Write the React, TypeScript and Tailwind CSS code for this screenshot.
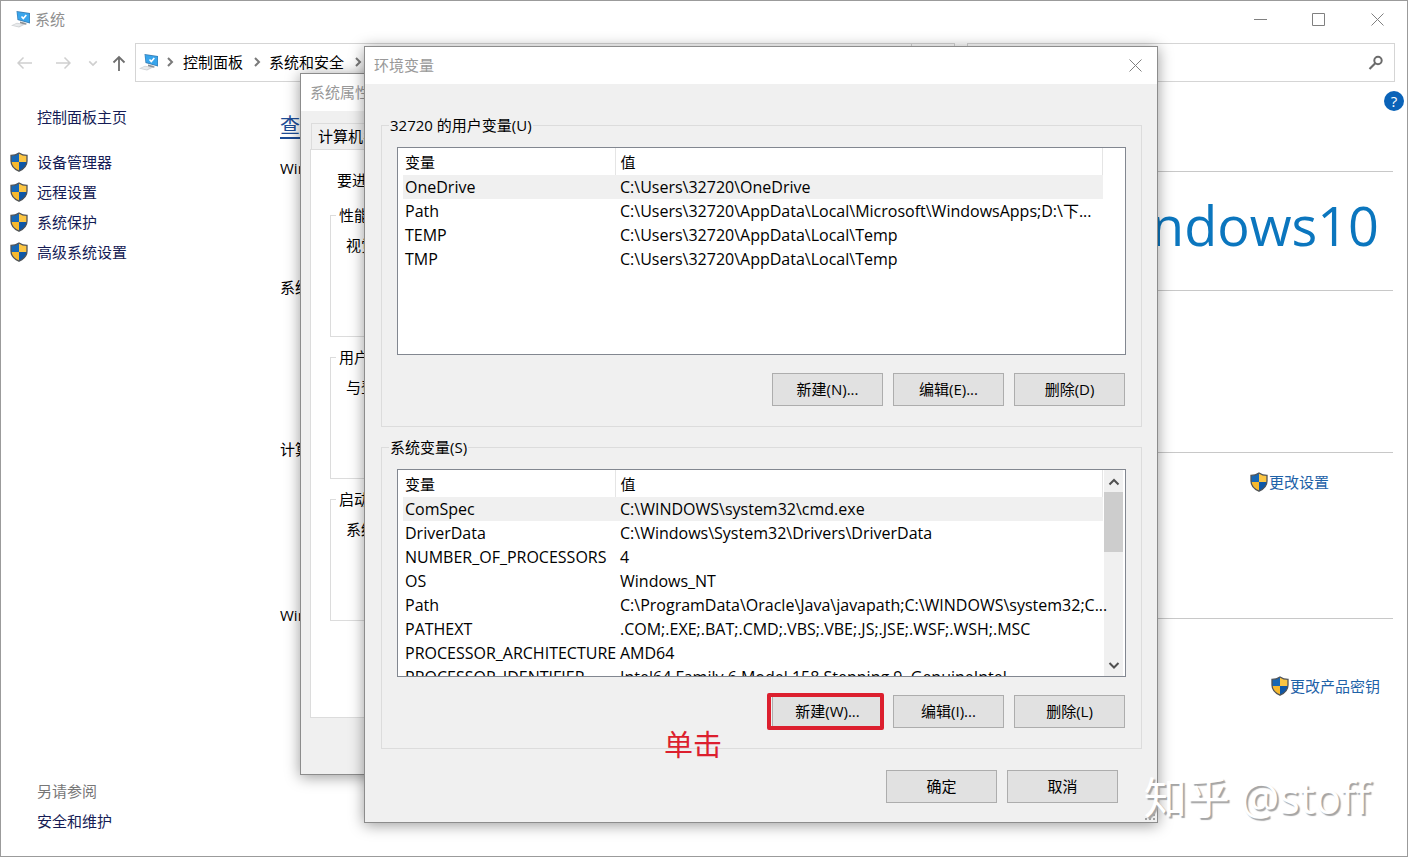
const Shield = () => (
  <svg className="h-5 w-[18px] shrink-0" viewBox="0 0 18 20" aria-hidden="true">
    <clipPath id="shield">
      <path d="M9 1C7 2.400 4 3.400 1 3.400V9c0 5 3.500 8.200 8 10.200 4.500-2 8-5.200 8-10.200V3.400C14 3.400 11 2.400 9 1z" />
    </clipPath>
    <g clipPath="url(#shield)">
      <path fill="#1767b5" d="M0 0h9v10H0z" />
      <path fill="#fbc543" d="M9 0h9v10H9z" />
      <path fill="#f6b92f" d="M0 10h9v10H0z" />
      <path fill="#0f57a6" d="M9 10h9v10H9z" />
    </g>
    <path
      fill="none"
      stroke="#4f5358"
      strokeWidth="1.300"
      d="M9 1C7 2.400 4 3.400 1 3.400V9c0 5 3.500 8.200 8 10.200 4.500-2 8-5.200 8-10.200V3.400C14 3.400 11 2.400 9 1z"
    />
  </svg>
)

const Computer = () => (
  <svg className="h-[18px] w-5 shrink-0" viewBox="0 0 20 18" aria-hidden="true">
    <path fill="#cfd2d5" d="m0 15.500 6-2.700 8 1.700-6 3z" />
    <path fill="#e9ebec" d="m2 15.300 4-1.700 5.500 1.200-4 1.800z" />
    <path fill="#8b9197" d="m9 11.500 5 1.200 2 1.300-1.500.800L9 13.200z" />
    <path fill="#3a7fb5" d="m5.500 1 13.500 2v10.500L6.500 10z" />
    <path fill="#38a5ec" d="m6.200 1.900 12.100 1.800v8.700L7.200 9.300z" />
    <path fill="none" stroke="#fff" strokeWidth="1.600" d="m10.500 6.500 1.800 2 3-3.500" />
  </svg>
)

const Cross = () => (
  <svg className="h-[13px] w-[13px]" viewBox="0 0 13 13" aria-hidden="true">
    <path fill="none" stroke="#808080" d="m.5.500 12 12M12.500.500l-12 12" />
  </svg>
)

const Chevron = ({ className, d }: any) => (
  <svg className={className} viewBox="0 0 12 12" aria-hidden="true">
    <path fill="none" stroke="currentColor" strokeWidth="2" d={d} />
  </svg>
)

const right = 'm4 2 4 4-4 4'
const down = 'm1.500 4 4.500 4.500L10.500 4'
const up = 'm1.500 8.500 4.500-4.500 4.500 4.500'

const PushButton = ({ children }: any) => (
  <button type="button" className="h-[33px] w-[111px] border border-[#adadad] bg-[#e1e1e1] pb-[2px]">
    {children}
  </button>
)

const userVars = [
  ['OneDrive', 'C:\\Users\\32720\\OneDrive'],
  ['Path', 'C:\\Users\\32720\\AppData\\Local\\Microsoft\\WindowsApps;D:\\下...'],
  ['TEMP', 'C:\\Users\\32720\\AppData\\Local\\Temp'],
  ['TMP', 'C:\\Users\\32720\\AppData\\Local\\Temp'],
]

const systemVars = [
  ['ComSpec', 'C:\\WINDOWS\\system32\\cmd.exe'],
  ['DriverData', 'C:\\Windows\\System32\\Drivers\\DriverData'],
  ['NUMBER_OF_PROCESSORS', '4'],
  ['OS', 'Windows_NT'],
  ['Path', 'C:\\ProgramData\\Oracle\\Java\\javapath;C:\\WINDOWS\\system32;C...'],
  ['PATHEXT', '.COM;.EXE;.BAT;.CMD;.VBS;.VBE;.JS;.JSE;.WSF;.WSH;.MSC'],
  ['PROCESSOR_ARCHITECTURE', 'AMD64'],
  ['PROCESSOR_IDENTIFIER', 'Intel64 Family 6 Model 158 Stepping 9, GenuineIntel'],
]

const VarList = ({ rows, scroll }: any) => (
  <div className="flex h-[208px] overflow-hidden border border-[#828790] bg-white pl-[5px]">
    <div className="relative z-10 min-w-0 flex-1">
      <table className="w-full table-fixed border-collapse text-left whitespace-nowrap">
        <thead>
          <tr className="h-[27px]">
            <th className="w-[212px] border-r border-[#e5e5e5] pt-px pl-[2px] font-normal">变量</th>
            <th className="border-r border-[#e5e5e5] pt-px pl-[5px] font-normal">值</th>
          </tr>
        </thead>
        <tbody className="text-base leading-[22px]">
          {rows.map(([name, value]: string[], i: number) => (
            <tr key={name} className={i === 0 ? 'h-6 bg-[#f0f0f0]' : 'h-6'}>
              <td className="p-0 pl-[2px]">{name}</td>
              <td className="p-0 pl-[5px]">{value}</td>
            </tr>
          ))}
        </tbody>
      </table>
    </div>
    {scroll ? (
      <div className="mr-[2px] ml-px flex w-[19px] flex-col bg-[#f0f0f0] py-px text-[#505050]">
        <button type="button" aria-label="向上滚动" className="flex h-[21px] items-center justify-center">
          <Chevron className="h-3 w-3" d={up} />
        </button>
        <div className="h-[60px] bg-[#cdcdcd]" />
        <button type="button" aria-label="向下滚动" className="mt-auto flex h-[21px] items-center justify-center">
          <Chevron className="h-3 w-3" d={down} />
        </button>
      </div>
    ) : (
      <div className="w-[22px]" />
    )}
  </div>
)

const VarGroup = ({ title, rows, scroll, children }: any) => (
  <fieldset className="border border-[#dcdcdc] px-[15px] pb-5">
    <legend className="-ml-2 px-px leading-[22px]">{title}</legend>
    <div className="pt-[11px]">
      <VarList rows={rows} scroll={scroll} />
    </div>
    <div className="mt-[18px] flex justify-end gap-[10px] pr-px">{children}</div>
  </fieldset>
)

const EnvDialog = () => (
  <section
    aria-label="环境变量"
    className="absolute top-[45px] left-[363px] w-[794px] border border-[#8c8c8c] bg-[#f0f0f0] pb-[19px] shadow-[0_2px_14px_rgba(0,0,0,0.4)]"
  >
    <header className="flex h-[37px] items-center justify-between bg-white pr-[15px] pb-px pl-[9px] text-[#999]">
      <h2>环境变量</h2>
      <button type="button" aria-label="关闭">
        <Cross />
      </button>
    </header>
    <div className="pt-[30px] pr-[15px] pl-4">
      <VarGroup title="32720 的用户变量(U)" rows={userVars}>
        <PushButton>新建(N)...</PushButton>
        <PushButton>编辑(E)...</PushButton>
        <PushButton>删除(D)</PushButton>
      </VarGroup>
      <div className="mt-[9px]">
        <VarGroup title="系统变量(S)" rows={systemVars} scroll>
          <div className="relative">
            <PushButton>新建(W)...</PushButton>
            <div className="absolute -inset-y-[2px] -right-px -left-[5px] rounded-xs border-4 border-[#dc1f2e]" />
            <p className="absolute top-8 -left-[108px] text-[29px] leading-9 whitespace-nowrap text-[#dc1f2e]">单击</p>
          </div>
          <PushButton>编辑(I)...</PushButton>
          <PushButton>删除(L)</PushButton>
        </VarGroup>
      </div>
      <div className="mt-[21px] flex justify-end gap-[10px] pr-6">
        <PushButton>确定</PushButton>
        <PushButton>取消</PushButton>
      </div>
    </div>
    <svg className="absolute right-[2px] bottom-[2px] h-[10px] w-[10px]" viewBox="0 0 10 10" aria-hidden="true">
      <path fill="#a0a0a0" d="M0 8h2v2H0zM4 8h2v2H4zM8 8h2v2H8zM4 4h2v2H4zM8 4h2v2H8zM8 0h2v2H8z" />
    </svg>
  </section>
)

const PropGroup = ({ title, children }: any) => (
  <fieldset className="mb-[9px] h-[133px] border border-[#dcdcdc] px-[15px]">
    <legend className="-ml-[10px] px-[3px] leading-[22px]">{title}</legend>
    <p className="pt-2">{children}</p>
  </fieldset>
)

const PropDialog = () => (
  <section
    aria-label="系统属性"
    className="absolute top-[72px] left-[299px] flex h-[702px] w-[620px] flex-col border border-[#8c8c8c] bg-[#f0f0f0] px-[9px] pb-14 shadow-[0_2px_14px_rgba(0,0,0,0.4)]"
  >
    <header className="-mx-[9px] flex h-[37px] shrink-0 items-center bg-white pb-px pl-[9px] text-[#999]">
      <h2>系统属性</h2>
    </header>
    <div className="mt-3 flex pl-px">
      <button type="button" className="h-[26px] border border-b-0 border-[#dcdcdc] px-[6px] pb-px">
        计算机名
      </button>
    </div>
    <div className="flex-1 border border-[#dcdcdc] bg-white px-[19px] pt-[19px]">
      <p className="mb-[13px] pl-[7px]">要进行</p>
      <PropGroup title="性能">视觉</PropGroup>
      <PropGroup title="用户">与登录</PropGroup>
      <PropGroup title="启动">系统</PropGroup>
    </div>
  </section>
)

const Section = ({ title, className, children }: any) => (
  <section className={className}>
    <div className="flex h-[22px] items-center gap-2">
      <h2>{title}</h2>
      <div className="mt-[6px] h-px flex-1 bg-[#c8c8c8]" />
    </div>
    {children}
  </section>
)

const tasks = ['设备管理器', '远程设置', '系统保护', '高级系统设置']

export default function App() {
  return (
    <div className="relative flex min-h-screen flex-col overflow-hidden border border-[#9b9b9b] bg-white font-['Open_Sans','Noto_Sans_CJK_SC',sans-serif] text-[15px] leading-[22px] text-black">
      <header className="flex h-9 items-center pl-[10px]">
        <Computer />
        <h1 className="ml-1 text-[#8f8f8f]">系统</h1>
        <div className="ml-auto flex">
          <button type="button" aria-label="最小化" className="flex w-[58px] justify-center">
            <svg className="h-[13px] w-[13px]" viewBox="0 0 13 13" aria-hidden="true">
              <path stroke="#808080" d="M0 6.500h13" />
            </svg>
          </button>
          <button type="button" aria-label="最大化" className="flex w-[58px] justify-center">
            <svg className="h-[13px] w-[13px]" viewBox="0 0 13 13" aria-hidden="true">
              <path fill="none" stroke="#808080" d="M.5.500h12v12H.5z" />
            </svg>
          </button>
          <button type="button" aria-label="关闭" className="flex w-[60px] justify-center">
            <Cross />
          </button>
        </div>
      </header>

      <div className="mt-[6px] flex h-[39px] items-center pr-3">
        <div className="flex w-[134px] shrink-0 items-center pl-4">
          <button type="button" aria-label="后退">
            <svg className="h-4 w-4" viewBox="0 0 16 16" aria-hidden="true">
              <path fill="none" stroke="#cfcfcf" strokeWidth="1.500" d="M15 8H1m5.500-5.500L1 8l5.500 5.500" />
            </svg>
          </button>
          <button type="button" aria-label="前进" className="ml-[22px]">
            <svg className="h-4 w-4" viewBox="0 0 16 16" aria-hidden="true">
              <path fill="none" stroke="#cfcfcf" strokeWidth="1.500" d="M1 8h14M9.500 2.500 15 8l-5.500 5.500" />
            </svg>
          </button>
          <button type="button" aria-label="最近" className="ml-[17px] text-[#cfcfcf]">
            <Chevron className="h-[10px] w-[10px]" d={down} />
          </button>
          <button type="button" aria-label="上移" className="ml-[14px]">
            <svg className="h-[18px] w-[14px]" viewBox="0 0 14 18" aria-hidden="true">
              <path fill="none" stroke="#6e6e6e" strokeWidth="1.800" d="M7 17V3M1.500 8.500 7 3l5.500 5.500" />
            </svg>
          </button>
        </div>
        <nav aria-label="地址" className="flex h-full flex-1 items-center border border-[#d5d5d5] pb-px pl-[3px]">
          <Computer />
          <Chevron className="ml-[5px] h-3 w-3 text-[#7a7a7a]" d={right} />
          <a href="#panel" className="ml-[7px]">控制面板</a>
          <Chevron className="ml-2 h-3 w-3 text-[#7a7a7a]" d={right} />
          <a href="#security" className="ml-[6px]">系统和安全</a>
          <Chevron className="ml-2 h-3 w-3 text-[#7a7a7a]" d={right} />
          <div className="mr-[42px] ml-auto h-full w-px bg-[#d5d5d5]" />
        </nav>
        <div className="ml-3 flex h-full w-[428px] items-center border border-[#d5d5d5] pr-[10px]">
          <input type="search" aria-label="搜索控制面板" className="h-full min-w-0 flex-1 outline-none" />
          <svg className="h-4 w-4" viewBox="0 0 16 16" aria-hidden="true">
            <circle cx="10" cy="5.500" r="3.700" fill="none" stroke="#6b6b6b" strokeWidth="2" />
            <path stroke="#6b6b6b" strokeWidth="2.200" d="M7.500 8 1.500 14" />
          </svg>
        </div>
      </div>

      <div className="flex flex-1">
        <aside className="flex w-[279px] shrink-0 flex-col pt-6 pb-6 pl-[9px] text-[#151c55]">
          <a href="#home" className="ml-[27px]">控制面板主页</a>
          <ul className="mt-5 flex flex-col">
            {tasks.map((task) => (
              <li key={task} className="h-[30px]">
                <a href="#task" className="flex h-7 items-center gap-[9px]">
                  <Shield />
                  {task}
                </a>
              </li>
            ))}
          </ul>
          <p className="mt-auto ml-[27px] text-[#777]">另请参阅</p>
          <a href="#maintenance" className="mt-2 ml-[27px]">安全和维护</a>
        </aside>

        <main className="relative flex-1 pt-[30px] pr-[14px]">
          <button
            type="button"
            aria-label="帮助"
            className="absolute top-[9px] right-[3px] flex h-5 w-5 items-center justify-center rounded-full bg-[#0a63b8] text-white"
          >
            ?
          </button>
          <h1 className="text-xl leading-7 text-[#1d4c96] underline underline-offset-4">查看</h1>
          <Section title="Windows" className="mt-[17px] h-[119px]">
            <p className="mt-[10px] pr-[14px] text-right text-[54px] leading-[72px] text-[#0b76be]">Windows10</p>
          </Section>
          <Section title="系统" className="h-[162px]" />
          <Section title="计算机" className="h-[166px]">
            <a href="#settings" className="mt-[11px] mr-16 flex items-center justify-end gap-px text-[#1e62a8]">
              <Shield />
              更改设置
            </a>
          </Section>
          <Section title="Windows">
            <a href="#key" className="mt-[49px] mr-[13px] flex items-center justify-end gap-px text-[#1e62a8]">
              <Shield />
              更改产品密钥
            </a>
          </Section>
        </main>
      </div>

      <PropDialog />
      <EnvDialog />

      <p className="absolute right-[37px] bottom-[30px] text-[43px] leading-[56px] whitespace-nowrap text-white [text-shadow:2px_2px_1px_#a5a5a5]">
        知乎 @stoff
      </p>
    </div>
  )
}
